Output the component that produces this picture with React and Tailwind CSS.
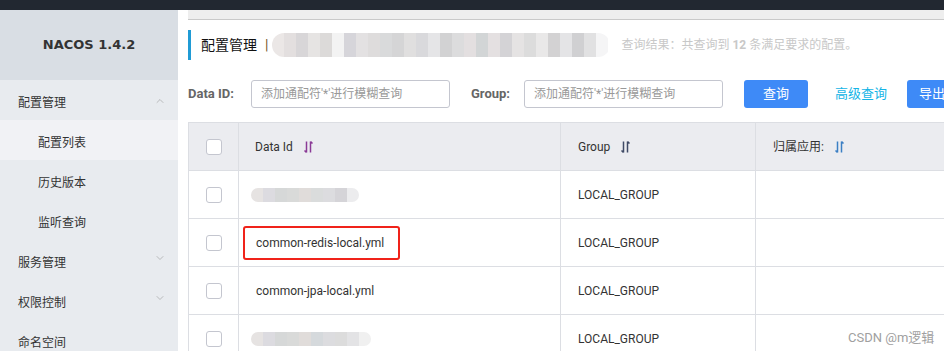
import { ChevronUp, ChevronDown } from 'lucide-react'

const FONT = { fontFamily: 'Roboto, "Noto Sans CJK SC", sans-serif' }

function SortIcon({ color }) {
  return (
    <svg width="11" height="14" viewBox="0 0 11 14" className="ml-[10px] inline-block" fill="none" stroke={color} strokeWidth="1.5">
      <path d="M3.5 1.5v11M3.5 12.5L1.5 10.5" />
      <path d="M7.5 1.5v11M7.5 1.5L9.5 3.5" />
    </svg>
  )
}

function Blur({ shades, h = 'h-[14px]', cell = 'w-[12px]' }) {
  return (
    <div className={`flex ${h} overflow-hidden rounded-full blur-[0.6px]`}>
      {shades.map((c, i) => (
        <div key={i} className={`${cell} h-full shrink-0`} style={{ background: c }} />
      ))}
    </div>
  )
}

function Checkbox() {
  return <div className="w-4 h-4 rounded-[3px] border border-[#c4c6cf] bg-white" />
}

const menu = [
  { label: '配置管理', open: true },
  { label: '配置列表', sub: true, active: true },
  { label: '历史版本', sub: true },
  { label: '监听查询', sub: true },
  { label: '服务管理', closed: true },
  { label: '权限控制', closed: true },
  { label: '命名空间' },
]

const rows = [
  { blur: ['#e6e3e2', '#dcdbe0', '#d6d8d8', '#d9dad9', '#e0dcda', '#dadcdc', '#dcdcdf', '#d5d4d8', '#ececee'] },
  { id: 'common-redis-local.yml', mark: true },
  { id: 'common-jpa-local.yml' },
  { blur: ['#e6e3e2', '#dcdbe0', '#d6d8d8', '#d9dad9', '#e0dcda', '#d5d9dc', '#dcdcdf', '#dcdcdc', '#e3e3e5', '#f0f0f0'] },
]

export default function App() {
  return (
    <div className="w-[944px] h-[351px] overflow-hidden bg-white relative text-[#333]" style={FONT}>
      <div className="h-[10px] bg-[#222831]" />
      <div className="flex">
        <aside className="w-[178px] shrink-0 bg-[#e8ebef] h-[341px]">
          <div className="h-[70px] bg-[#d9dee4] flex items-center justify-center">
            <span className="text-[13px] font-bold text-[#333]" style={{ fontFamily: '"DejaVu Sans", sans-serif' }}>
              NACOS 1.4.2
            </span>
          </div>
          {menu.map((m) => (
            <div
              key={m.label}
              className={`h-10 pt-[5px] flex items-center justify-between text-[12px] text-[#333] pr-[12px] ${m.sub ? 'pl-[38px]' : 'pl-[18px]'} ${m.active ? 'bg-[#f1f2f5]' : ''}`}
            >
              <span>{m.label}</span>
              {m.open && <ChevronUp size={12} strokeWidth={1.2} className="text-[#999] -mt-[4px]" />}
              {m.closed && <ChevronDown size={12} strokeWidth={1.2} className="text-[#999] -mt-[10px]" />}
            </div>
          ))}
        </aside>

        <main className="flex-1 min-w-0 pl-[10px]">
          <div className="h-[10px] bg-[#eeeeee] border-b border-[#c9c9c9]" />

          <div className="mt-[10px] flex items-center h-[30px]">
            <div className="w-[3px] h-[30px] bg-[#209bd5] shrink-0" />
            <span className="ml-[10px] text-[14px] text-[#111] shrink-0">配置管理</span>
            <span className="ml-[8px] text-[14px] text-[#7a5a2a] shrink-0">|</span>
            <div className="ml-[4px] w-[338px] shrink-0">
              <Blur
                h="h-[24px]"
                cell="w-[12px]"
                shades={['#ebe7e6', '#e3dfdf', '#d8d6d8', '#e6e4e3', '#dcdad9', '#f3f3f3', '#d6d5da', '#e3e1e2', '#dedcdc', '#d9dadb', '#d5d5d6', '#e0dfdf', '#d9d9dc', '#e5e5e7', '#d2d2d3', '#dcdcdd', '#e3dfe0', '#d2d5d6', '#e4e0e1', '#d4d3d6', '#e5e3e3', '#dcdcdc', '#e9e8e8', '#d3d2d3', '#e4e4e6', '#d0d0d2', '#e1e1e2', '#f5f5f6']}
              />
            </div>
            <span className="ml-[11px] text-[12px] text-[#c8c8c8] shrink-0">
              查询结果：共查询到 <b>12</b> 条满足要求的配置。
            </span>
          </div>

          <div className="mt-[20px] flex items-center h-[28px] text-[12px] whitespace-nowrap">
            <span className="font-bold text-[13px] text-[#666] w-[63px] shrink-0">Data ID:</span>
            <div className="w-[199px] shrink-0 h-[28px] border border-[#c4c6cf] rounded-[3px] flex items-center pl-[9px] text-[#999]">
              添加通配符'*'进行模糊查询
            </div>
            <span className="ml-[21px] font-bold text-[13px] text-[#666] w-[53px] shrink-0">Group:</span>
            <div className="w-[199px] shrink-0 h-[28px] border border-[#c4c6cf] rounded-[3px] flex items-center pl-[9px] text-[#999]">
              添加通配符'*'进行模糊查询
            </div>
            <button className="ml-[21px] w-[64px] shrink-0 h-[28px] rounded-[3px] bg-[#3e8af7] text-white text-[13px]">查询</button>
            <span className="ml-[27px] text-[13px] text-[#14b4e6] shrink-0">高级查询</span>
            <button className="ml-[20px] w-[64px] h-[28px] rounded-[3px] bg-[#3e8af7] text-white text-[13px] shrink-0 text-left pl-[12px]">导出配置</button>
          </div>

          <div className="mt-[14px] w-[820px] border-l border-t border-[#dcdee3] text-[12px]">
            <div className="flex h-[48px] bg-[#ebecf0] border-b border-[#dcdee3]">
              <div className="w-[50px] shrink-0 border-r border-[#dcdee3] flex items-center justify-center">
                <Checkbox />
              </div>
              <div className="w-[322px] shrink-0 border-r border-[#dcdee3] flex items-center pl-[16px]">
                Data Id <SortIcon color="#8a3a96" />
              </div>
              <div className="w-[195px] shrink-0 border-r border-[#dcdee3] flex items-center pl-[17px]">
                Group <SortIcon color="#3f4a66" />
              </div>
              <div className="flex-1 flex items-center pl-[17px]">
                归属应用: <SortIcon color="#3b7fc4" />
              </div>
            </div>
            {rows.map((r, i) => (
              <div key={i} className="flex h-[48px] border-b border-[#dcdee3]">
                <div className="w-[50px] shrink-0 border-r border-[#dcdee3] flex items-center justify-center">
                  <Checkbox />
                </div>
                <div className="w-[322px] shrink-0 border-r border-[#dcdee3] flex items-center pl-[12px]">
                  {r.blur ? (
                    <Blur shades={r.blur} />
                  ) : r.mark ? (
                    <span className="-ml-[8px] border-2 border-[#f0231a] rounded-[3px] pl-[11px] pr-[14px] h-[34px] flex items-center">
                      {r.id}
                    </span>
                  ) : (
                    <span className="pl-[5px]">{r.id}</span>
                  )}
                </div>
                <div className="w-[195px] shrink-0 border-r border-[#dcdee3] flex items-center pl-[17px]">LOCAL_GROUP</div>
                <div className="flex-1" />
              </div>
            ))}
          </div>
        </main>
      </div>
      <span className="absolute left-[848px] top-[328px] text-[13px] text-[#a0a0a0]">CSDN @m逻辑</span>
    </div>
  )
}
